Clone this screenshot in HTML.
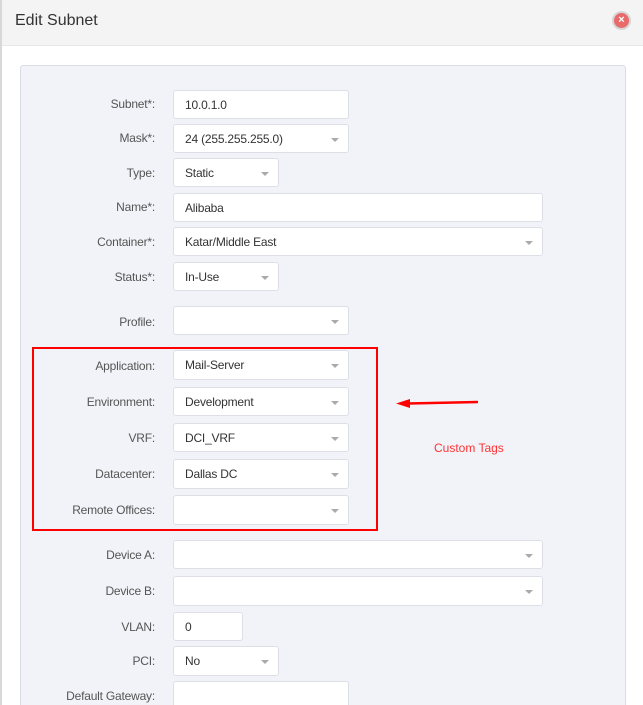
<!DOCTYPE html>
<html style="width:643px;height:705px;overflow:hidden"><head><meta charset="utf-8"><style>
*{box-sizing:border-box;margin:0;padding:0}
body{width:643px;height:705px;overflow:hidden;background:#fff;font-family:"Liberation Sans",sans-serif;position:relative}
.hdr{position:absolute;left:0;top:0;width:643px;height:46px;background:#f4f4f4;border-bottom:1px solid #e8e8e8}
.hdr h1{position:absolute;left:15px;top:12px;font-size:16px;font-weight:normal;color:#333}
.close{position:absolute;left:612px;top:11px;width:19px;height:19px;border-radius:50%;background:#e86a6a;border:2px solid #d6d6d6;color:#fff;font-size:11px;line-height:15px;text-align:center;font-weight:bold}
.edge{position:absolute;left:0;top:0;width:2px;height:705px;background:#d8d8d8}
.panel{position:absolute;left:20px;top:65px;width:606px;height:640px;background:#f2f3f8;border:1px solid #dadde6;border-bottom:none;border-radius:3px 3px 0 0}
.lab{position:absolute;width:155px;text-align:right;font-size:12px;color:#555;letter-spacing:-0.2px}
.inp{position:absolute;left:173px;height:29px;background:#fff;border:1px solid #dcdfe6;border-radius:3px;font-size:12px;color:#333;padding:7px 11px;letter-spacing:-0.2px}
.sel::after{content:"";position:absolute;right:9px;top:13px;border-left:4px solid transparent;border-right:4px solid transparent;border-top:4px solid #aaa}
.red{position:absolute;left:32px;top:347px;width:346px;height:184px;border:2.5px solid #f00}
.ct{position:absolute;left:434px;top:441px;font-size:12px;color:#f33}
</style></head><body>
<div class="hdr"><h1>Edit Subnet</h1><div class="close">×</div></div>
<div class="edge"></div>
<div class="panel"></div>

<div class="lab" style="top:97px">Subnet*:</div><div class="inp" style="top:90px;width:176px">10.0.1.0</div>
<div class="lab" style="top:131px">Mask*:</div><div class="inp sel" style="top:124px;width:176px">24 (255.255.255.0)</div>
<div class="lab" style="top:166px">Type:</div><div class="inp sel" style="top:158px;width:106px">Static</div>
<div class="lab" style="top:200px">Name*:</div><div class="inp" style="top:193px;width:370px">Alibaba</div>
<div class="lab" style="top:235px">Container*:</div><div class="inp sel" style="top:227px;width:370px">Katar/Middle East</div>
<div class="lab" style="top:270px">Status*:</div><div class="inp sel" style="top:262px;width:106px">In-Use</div>
<div class="lab" style="top:315px">Profile:</div><div class="inp sel" style="top:306px;width:176px"></div>
<div class="lab" style="top:359px">Application:</div><div class="inp sel" style="top:350px;width:176px;height:30px">Mail-Server</div>
<div class="lab" style="top:395px">Environment:</div><div class="inp sel" style="top:387px;width:176px">Development</div>
<div class="lab" style="top:431px">VRF:</div><div class="inp sel" style="top:423px;width:176px">DCI_VRF</div>
<div class="lab" style="top:467px">Datacenter:</div><div class="inp sel" style="top:459px;width:176px;height:30px">Dallas DC</div>
<div class="lab" style="top:503px">Remote Offices:</div><div class="inp sel" style="top:495px;width:176px;height:30px"></div>
<div class="lab" style="top:548px">Device A:</div><div class="inp sel" style="top:540px;width:370px"></div>
<div class="lab" style="top:584px">Device B:</div><div class="inp sel" style="top:576px;width:370px;height:30px"></div>
<div class="lab" style="top:620px">VLAN:</div><div class="inp" style="top:612px;width:70px">0</div>
<div class="lab" style="top:654px">PCI:</div><div class="inp sel" style="top:646px;width:106px;height:30px">No</div>
<div class="lab" style="top:689px">Default Gateway:</div><div class="inp" style="top:681px;width:176px;height:24px;border-bottom:none;border-radius:3px 3px 0 0"></div>

<div class="red"></div>
<svg style="position:absolute;left:390px;top:395px" width="95" height="16"><path d="M88 7 L18 8.5" stroke="#f00" stroke-width="2.5"/><path d="M6 8.5 L20 4 L20 13 Z" fill="#f00"/></svg>
<div class="ct">Custom Tags</div>
</body></html>
